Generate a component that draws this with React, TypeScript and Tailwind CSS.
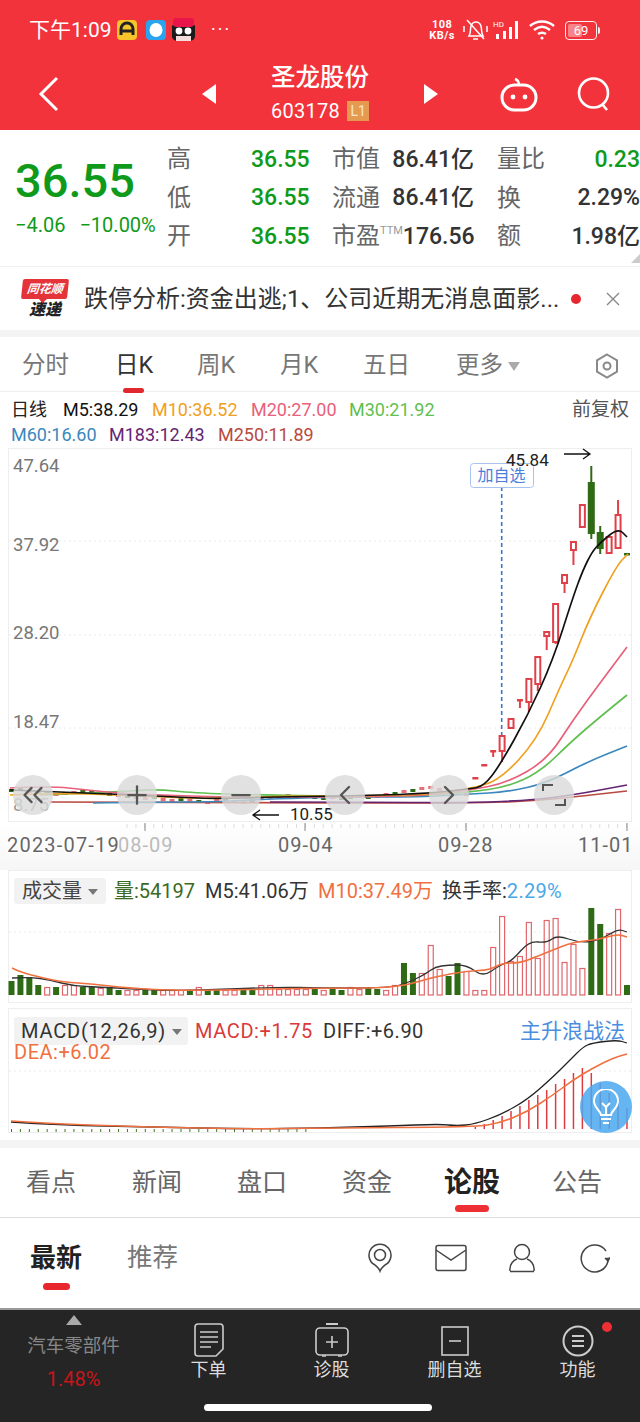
import { ChevronLeft, ChevronRight, ChevronsLeft, Minus, Plus } from "lucide-react";

type Pt = [number, number];

// smooth line through the points, good enough for the MA curves
const smooth = (pts: Pt[]) => {
  let d = `M${pts[0][0]} ${pts[0][1]}`;
  for (let i = 1; i < pts.length - 1; i++) {
    const mx = (pts[i][0] + pts[i + 1][0]) / 2;
    const my = (pts[i][1] + pts[i + 1][1]) / 2;
    d += ` Q${pts[i][0]} ${pts[i][1]} ${mx} ${my}`;
  }
  const last = pts[pts.length - 1];
  return d + ` L${last[0]} ${last[1]}`;
};

const barX = (i: number) => 11.5 + i * 8.92;
const RED = "#e0404a";
const GREEN = "#2f6b14";

const maLines: { color: string; pts: Pt[] }[] = [
  { color: "#b84a40", pts: [[50, 802], [297, 803], [400, 803], [470, 803], [533, 801], [573, 797], [627, 791]] },
  { color: "#642472", pts: [[270, 802], [380, 802], [470, 803], [533, 800], [573, 795], [627, 785]] },
  { color: "#3b88bc", pts: [[93, 803], [157, 802], [213, 802], [270, 799], [340, 797], [420, 797], [470, 794], [507, 792], [547, 783], [587, 762], [627, 746]] },
  { color: "#5fbf4f", pts: [[40, 795], [117, 792], [157, 789], [193, 793], [260, 795], [340, 796], [420, 796], [470, 792], [507, 787], [540, 772], [573, 740], [600, 717], [627, 695]] },
  { color: "#e8607a", pts: [[10, 788], [50, 786], [87, 790], [117, 793], [160, 795], [220, 797], [275, 797], [340, 797], [420, 796], [470, 790], [507, 783], [547, 760], [573, 720], [600, 683], [627, 647]] },
  { color: "#f0a020", pts: [[10, 795], [60, 793], [117, 795], [160, 797], [220, 799], [275, 796], [340, 796], [420, 795], [470, 789], [500, 780], [537, 740], [560, 687], [573, 660], [590, 617], [617, 565], [628, 554]] },
  { color: "#111111", pts: [[10, 790], [60, 792], [110, 794], [157, 796], [217, 799], [270, 797], [340, 796], [420, 794], [470, 789], [484, 786], [500, 765], [528, 715], [553, 660], [573, 597], [583, 570], [592, 552], [600, 543], [618, 528], [627, 537]] },
];

// top, bottom, wick top, wick bottom, green or red
const lateCandles: [number, number, number, number, boolean][] = [
  [778, 779, 778, 779, false],
  [765, 766, 765, 766, false],
  [751, 752, 751, 757, false],
  [736, 751, 736, 762, false],
  [719, 728, 719, 728, false],
  [700, 701, 700, 708, false],
  [679, 702, 679, 712, false],
  [657, 684, 657, 691, false],
  [632, 636, 632, 650, false],
  [604, 642, 604, 644, false],
  [575, 583, 575, 593, false],
  [542, 550, 542, 565, false],
  [505, 527, 505, 527, false],
  [483, 533, 466, 539, true],
  [533, 548, 526, 554, true],
  [537, 553, 537, 553, false],
  [515, 548, 500, 548, false],
  [554, 555, 554, 555, true],
];

const earlyCandles: [number, boolean][] = [
  [789, true], [788, true], [790, false], [791, true], [792, true], [793, false], [792, true], [791, false], [790, true], [791, true],
  [792, false], [793, true], [794, false], [795, true], [796, false], [797, false], [796, true], [798, false], [799, false], [798, true],
  [799, false], [800, true], [801, false], [799, false], [798, true], [800, false], [801, false], [799, true], [797, false], [796, false],
  [795, false], [794, false], [796, true], [795, false], [796, true], [797, true], [796, false], [797, true], [796, true], [795, false],
  [796, true], [795, false], [793, false], [792, true], [790, false], [789, true], [787, false], [786, false], [788, false], [790, false],
  [792, false], [793, false],
];

const volumes: [number, boolean][] = [
  [14, true], [20, true], [18, true], [10, true], [8, false], [8, true], [10, false], [10, false], [8, true], [8, true],
  [7, false], [7, true], [5, true], [5, false], [5, false], [5, true], [5, true], [5, false], [5, false], [5, false],
  [5, true], [8, false], [5, true], [5, true], [5, false], [5, false], [5, true], [5, true], [10, false], [10, false],
  [6, false], [6, false], [6, false], [6, false], [6, true],
  [5, false], [6, true], [5, true], [8, false], [6, false], [7, true], [6, true], [5, false], [10, false], [32, true],
  [22, true], [22, false], [50, false], [26, false], [19, true], [32, true], [24, false], [5, false], [5, false], [48, false],
  [79, false], [34, false], [39, false], [73, false], [37, false], [75, false], [77, false], [33, false], [51, false], [27, false],
  [87, true], [71, true], [62, false], [86, false], [10, true],
];

const macdTops = [1127, 1124, 1120, 1116, 1111, 1106, 1100, 1095, 1090, 1084, 1079, 1073, 1068, 1073, 1083, 1093, 1101, 1108];

const StatusBar = () => (
  <div className="relative flex h-[58px] items-center pt-[2px] pl-[29px] pr-[43px] text-white">
    <span className="w-[88px] text-[21px] leading-none">下午1:09</span>
    <svg width="20" height="20" viewBox="0 0 20 20">
      <rect width="20" height="20" rx="4" fill="#f7c52b" />
      <path d="M4 15V9a6 6 0 0 1 12 0v6" fill="none" stroke="#222" strokeWidth="3" />
      <path d="M4 11h12" stroke="#222" strokeWidth="3" />
    </svg>
    <svg className="ml-[9px]" width="20" height="20" viewBox="0 0 20 20">
      <rect width="20" height="20" rx="4" fill="#2aa4ee" />
      <ellipse cx="10" cy="10" rx="6.5" ry="7" fill="#fff" />
    </svg>
    <svg className="ml-[5px]" width="25" height="24" viewBox="0 0 25 24">
      <rect x="2" y="0" width="21" height="9" rx="3" fill="#e8154a" />
      <path d="M1 7l4 2h15l4-2v11a5 5 0 0 1-5 5H6a5 5 0 0 1-5-5z" fill="#1b1b1b" />
      <circle cx="8" cy="13" r="3.4" fill="#fff" />
      <circle cx="17" cy="13" r="3.4" fill="#fff" />
      <rect x="5" y="18" width="15" height="5" fill="#f2dcdc" />
    </svg>
    <span className="ml-[15px] text-[18px] leading-none tracking-[2px]">···</span>
    <div className="ml-auto flex items-center">
      <div className="flex flex-col items-center text-[11px] leading-[11px] font-bold tracking-[0.5px]">
        <span>108</span>
        <span>KB/s</span>
      </div>
      <svg className="ml-[6px]" width="28" height="26" viewBox="0 0 28 26" fill="none" stroke="#fff" strokeWidth="1.5">
        <path d="M8 19c2-3 1-6 2-10 1-3 3-4 5-4s4 1 5 4c1 4 0 7 2 10z" />
        <path d="M12 22h5M6 3l17 19M3 9v6M26 9v6" />
      </svg>
      <svg className="ml-[4px]" width="30" height="24" viewBox="0 0 30 24" fill="#fff">
        <rect x="3" y="16" width="3" height="5" />
        <rect x="10" y="13" width="3" height="8" />
        <rect x="16" y="9" width="3" height="12" />
        <rect x="22" y="3" width="3" height="18" />
        <text x="0" y="9" fontSize="8" fontFamily="Roboto, sans-serif">HD</text>
      </svg>
      <svg className="ml-[6px]" width="27" height="22" viewBox="0 0 27 22" fill="none" stroke="#fff" strokeWidth="2.4">
        <path d="M1 7c7-6 17-6 24 0M5 11c5-4 11-4 16 0M9 15c3-2 5-2 8 0" />
        <circle cx="13" cy="19" r="1.6" fill="#fff" stroke="none" />
      </svg>
      <div className="relative ml-[9px] flex h-[19px] w-[32px] items-center justify-center rounded-[4px] border border-white/90 text-[13px] leading-none">
        <div className="absolute top-[2px] bottom-[2px] left-[2px] w-[14px] rounded-[2px] bg-white/40" />
        <span className="relative">69</span>
        <div className="absolute top-[5px] -right-[4px] h-[7px] w-[2px] rounded-r bg-white/90" />
      </div>
    </div>
  </div>
);

const NavBar = () => (
  <div className="flex h-[72px] items-center text-white">
    <div className="flex w-[202px] pl-[38px]">
      <svg width="24" height="36" viewBox="0 0 24 36" fill="none" stroke="#fff" strokeWidth="3">
        <path d="M19 2L3 18l16 16" />
      </svg>
    </div>
    <svg width="14" height="20" viewBox="0 0 14 20" fill="#fff">
      <path d="M14 0v20L0 10z" />
    </svg>
    <div className="flex w-[208px] flex-col items-center pb-[5px]">
      <span className="text-[24.5px] leading-[33px] font-medium">圣龙股份</span>
      <div className="mt-[5px] flex items-center gap-[7px]">
        <span className="text-[20px] leading-[24px] tracking-[0.3px]">603178</span>
        <span className="flex h-[20px] w-[22px] items-center justify-center bg-[#e59a4f] text-[14px] leading-none text-[#fbe7c8]">L1</span>
      </div>
    </div>
    <svg width="14" height="20" viewBox="0 0 14 20" fill="#fff">
      <path d="M0 0v20l14-10z" />
    </svg>
    <svg className="ml-[62px]" width="38" height="36" viewBox="0 0 38 36" fill="none" stroke="#fff" strokeWidth="3">
      <rect x="2" y="9" width="34" height="25" rx="12.5" />
      <path d="M19 9c0-3-1-5-4-6" strokeWidth="2.4" />
      <circle cx="13" cy="21" r="2.4" fill="#fff" stroke="none" />
      <circle cx="25" cy="21" r="2.4" fill="#fff" stroke="none" />
    </svg>
    <svg className="ml-[39px]" width="34" height="36" viewBox="0 0 34 36" fill="none" stroke="#fff" strokeWidth="2.6">
      <circle cx="16.5" cy="17" r="14.5" />
      <path d="M25 28l5 6" />
    </svg>
  </div>
);

const StatRow = ({ label, high, midLabel, midValue, rightLabel, rightValue, rightColor }: {
  label: string;
  high: string;
  midLabel: React.ReactNode;
  midValue: string;
  rightLabel: string;
  rightValue: string;
  rightColor: string;
}) => (
  <div className="flex h-[38.5px] items-center text-[23px] leading-none">
    <span className="w-[84px] text-[24px] text-[#666]">{label}</span>
    <span className="w-[81px] font-medium text-[#0f9a1b]">{high}</span>
    <div className="flex w-[165px] items-center justify-between pr-[23px]">
      <span className="flex text-[24px] whitespace-nowrap text-[#666]">{midLabel}</span>
      <span className="font-medium text-[#333]">{midValue}</span>
    </div>
    <div className="flex w-[143px] items-center justify-between">
      <span className="text-[24px] text-[#666]">{rightLabel}</span>
      <span className={rightColor}>{rightValue}</span>
    </div>
  </div>
);

const Quote = () => (
  <div className="relative flex h-[137px] border-b border-[#f0f0f0]">
    <div className="w-[167px] pl-[15px] pt-[22px]">
      <div className="text-[47px] leading-[58px] font-medium text-[#0f9a1b]">36.55</div>
      <div className="mt-[3px] flex gap-[14px] text-[20px] leading-[24px] whitespace-nowrap text-[#0f9a1b]">
        <span>−4.06</span>
        <span>−10.00%</span>
      </div>
    </div>
    <div className="pt-[10px]">
      <StatRow label="高" high="36.55" midLabel="市值" midValue="86.41亿" rightLabel="量比" rightValue="0.23" rightColor="font-medium text-[#0f9a1b]" />
      <StatRow label="低" high="36.55" midLabel="流通" midValue="86.41亿" rightLabel="换" rightValue="2.29%" rightColor="font-medium text-[#333]" />
      <StatRow
        label="开"
        high="36.55"
        midLabel={<>市盈<span className="mt-[1px] text-[11px] leading-[12px] text-[#999]">TTM</span></>}
        midValue="176.56"
        rightLabel="额"
        rightValue="1.98亿"
        rightColor="font-medium text-[#333]"
      />
    </div>
    <div className="absolute right-0 bottom-[3px] h-0 w-0 border-b-[9px] border-l-[9px] border-b-[#ccc] border-l-transparent" />
  </div>
);

const NewsBar = () => (
  <div className="flex h-[63px] items-center pl-[22px]">
    <div className="flex w-[46px] flex-col items-center">
      <div className="relative flex h-[20px] w-[46px] -skew-x-6 items-center justify-center rounded-[2px] bg-[#e5333a] text-[12px] leading-none font-bold italic text-white">
        同花顺
        <div className="absolute -bottom-[4px] left-[18px] h-0 w-0 border-t-[4px] border-r-[4px] border-l-[4px] border-t-[#e5333a] border-r-transparent border-l-transparent" />
      </div>
      <div className="mt-[2px] text-[16px] leading-[18px] font-black italic text-[#222]">速递</div>
    </div>
    <span className="ml-[16px] w-[482px] text-[24px] leading-none whitespace-nowrap text-[#333]">跌停分析:资金出逃;1、公司近期无消息面影...</span>
    <div className="ml-[5px] size-[10px] rounded-full bg-[#e8262e]" />
    <svg className="ml-[24px]" width="16" height="16" viewBox="0 0 16 16" stroke="#888" strokeWidth="1.4">
      <path d="M2 2l12 12M14 2L2 14" />
    </svg>
  </div>
);

const PeriodTabs = () => (
  <div className="relative flex h-[55px] items-center border-b border-[#eee] pt-[3px] pl-[22px] text-[23.5px] leading-none text-[#777]">
    <span className="w-[93px]">分时</span>
    <span className="relative w-[82px] text-[#333]">
      日K
      <div className="absolute top-[34px] left-[8px] h-[5px] w-[21px] rounded-full bg-[#e0282e]" />
    </span>
    <span className="w-[83px]">周K</span>
    <span className="w-[83px]">月K</span>
    <span className="w-[93px]">五日</span>
    <span className="w-[47px]">更多</span>
    <div className="ml-[5px] mt-[2px] h-0 w-0 border-t-[9px] border-r-[6px] border-l-[6px] border-t-[#aaa] border-r-transparent border-l-transparent" />
    <svg className="ml-[75px]" width="24" height="26" viewBox="0 0 24 26" fill="none" stroke="#8a8a8a" strokeWidth="2">
      <path d="M12 1.5l10 5.8v11.4l-10 5.8-10-5.8V7.3z" />
      <circle cx="12" cy="13" r="3.5" />
    </svg>
  </div>
);

const Legend = () => (
  <div className="h-[56px] px-[11px] pt-[5px] text-[18px] leading-[25px]">
    <div className="flex">
      <span className="w-[52px] text-[#222]">日线</span>
      <span className="w-[89px] text-[#111]">M5:38.29</span>
      <span className="w-[99px] text-[#f0a020]">M10:36.52</span>
      <span className="w-[98px] text-[#e8607a]">M20:27.00</span>
      <span className="text-[#5fbf4f]">M30:21.92</span>
      <span className="ml-auto text-[19px] text-[#555]">前复权</span>
    </div>
    <div className="flex">
      <span className="w-[98px] text-[#3b88bc]">M60:16.60</span>
      <span className="w-[109px] text-[#642472]">M183:12.43</span>
      <span className="text-[#b84a40]">M250:11.89</span>
    </div>
  </div>
);

const axisFont = "Roboto, 'Noto Sans CJK SC', sans-serif";

const KChart = () => (
  <div className="relative mx-2 h-[374px] border border-[#eee]">
    <svg className="absolute -top-px -left-px h-[374px] w-[624px] overflow-visible" viewBox="8 448 624 374" fill="none" fontFamily={axisFont}>
      {[541, 635, 728].map((y) => (
        <path key={y} d={`M9 ${y}H631`} stroke="#eaeaea" strokeDasharray="2 3" />
      ))}
      <text x="13" y="472" fontSize="18.5" fill="#777">47.64</text>
      <text x="13" y="551" fontSize="18.5" fill="#777">37.92</text>
      <text x="13" y="639" fontSize="18.5" fill="#777">28.20</text>
      <text x="13" y="728" fontSize="18.5" fill="#777">18.47</text>
      <text x="13" y="811" fontSize="18.5" fill="#999">8.75</text>
      <path d="M501.7 487V752" stroke="#3f72c8" strokeWidth="1.6" strokeDasharray="4 3" />
      {earlyCandles.map(([y, green], i) => (
        <rect key={i} x={barX(i) - 2.5} y={y} width="5" height="3" fill={green ? GREEN : RED} fillOpacity={green ? 1 : 0.75} />
      ))}
      {lateCandles.map(([top, bottom, wickTop, wickBottom, green], i) => {
        const x = barX(52 + i);
        const color = green ? GREEN : RED;
        if (bottom - top < 2) {
          return (
            <g key={i}>
              <path d={`M${x} ${wickTop}V${wickBottom}`} stroke={color} strokeWidth="2" />
              <rect x={x - 3} y={top - 1} width="6" height="2.5" fill={color} />
            </g>
          );
        }
        return (
          <g key={i}>
            <path d={`M${x} ${wickTop}V${wickBottom}`} stroke={color} strokeWidth="2" />
            <rect x={x - 2.5} y={top} width="5" height={bottom - top} fill={green ? GREEN : "#fff"} stroke={color} strokeWidth="2" />
          </g>
        );
      })}
      {maLines.map((line) => (
        <path key={line.color} d={smooth(line.pts)} stroke={line.color} strokeWidth="1.7" />
      ))}
      <rect x="470.5" y="463.5" width="63" height="24" rx="3" fill="#fff" stroke="#a8c4ee" />
      <text x="501.5" y="481" fontSize="16" fill="#4a7fd8" textAnchor="middle">加自选</text>
      <text x="506" y="466" fontSize="17" fill="#222">45.84</text>
      <path d="M564 454h26M583 449l7 5-7 5" stroke="#111" strokeWidth="1.3" />
      <text x="290" y="820" fontSize="17" fill="#222">10.55</text>
      <path d="M279 815h-26M260 810l-7 5 7 5" stroke="#111" strokeWidth="1.3" />
    </svg>
    <div className="absolute top-[326px] left-[4px] flex size-10 items-center justify-center rounded-full bg-[#d9d9d9]/80">
      <ChevronsLeft size={34} strokeWidth={1.6} className="text-[#555]" />
    </div>
    <div className="absolute top-[326px] left-[108px] flex size-10 items-center justify-center rounded-full bg-[#d9d9d9]/80">
      <Plus size={30} strokeWidth={1.8} className="text-[#555]" />
    </div>
    <div className="absolute top-[326px] left-[212px] flex size-10 items-center justify-center rounded-full bg-[#d9d9d9]/80">
      <Minus size={30} strokeWidth={1.8} className="text-[#555]" />
    </div>
    <div className="absolute top-[326px] left-[316px] flex size-10 items-center justify-center rounded-full bg-[#d9d9d9]/80">
      <ChevronLeft size={32} strokeWidth={1.8} className="text-[#555]" />
    </div>
    <div className="absolute top-[326px] left-[420px] flex size-10 items-center justify-center rounded-full bg-[#d9d9d9]/80">
      <ChevronRight size={32} strokeWidth={1.8} className="text-[#555]" />
    </div>
    <div className="absolute top-[326px] left-[525px] flex size-10 items-center justify-center rounded-full bg-[#d9d9d9]/80">
      <svg width="24" height="22" viewBox="0 0 24 22" fill="none" stroke="#555" strokeWidth="2">
        <path d="M1 7V1h10M23 15v6H13" />
      </svg>
    </div>
  </div>
);

const DateAxis = () => (
  <div className="h-[48px] bg-gradient-to-b from-white to-[#f6f6f6]">
    <svg className="block h-[48px] w-[640px]" viewBox="0 822 640 48" fontFamily={axisFont}>
      {Array.from({ length: 57 }, (_, i) => (
        <path key={i} d={`M${127 + i * 8.92} 824v4`} stroke="#ddd" />
      ))}
      {[145, 305, 466, 627].map((x) => (
        <path key={x} d={`M${x} 823v8`} stroke="#888" />
      ))}
      <text x="118" y="852" fontSize="20" fill="#bbb" letterSpacing="1">08-09</text>
      <text x="7" y="852" fontSize="20" fill="#666" letterSpacing="1.2" stroke="#fff" strokeWidth="3" paintOrder="stroke">2023-07-19</text>
      <text x="278" y="852" fontSize="20" fill="#666" letterSpacing="1">09-04</text>
      <text x="438" y="852" fontSize="20" fill="#666" letterSpacing="1">09-28</text>
      <text x="578" y="852" fontSize="20" fill="#666" letterSpacing="1">11-01</text>
    </svg>
  </div>
);

const VolumePanel = () => (
  <div className="relative mx-2 h-[133px] border border-[#eee]">
    <svg className="absolute -top-px -left-px h-[133px] w-[624px]" viewBox="8 870 624 133" fill="none">
      <path d="M9 932H631" stroke="#eaeaea" strokeDasharray="2 3" />
      {volumes.map(([h, green], i) =>
        green ? (
          <rect key={i} x={barX(i) - 3} y={995 - h} width="6" height={h} fill={GREEN} />
        ) : (
          <rect key={i} x={barX(i) - 2.5} y={995 - h + 0.5} width="5" height={h - 0.5} fill="#fff" stroke="#e0666c" strokeWidth="1.2" />
        ),
      )}
      <path d={smooth([[12, 978], [30, 977], [50, 980], [73, 986], [100, 987], [133, 989], [183, 991], [277, 987], [320, 988], [390, 988], [410, 982], [427, 973], [435, 967], [448, 965], [467, 965], [483, 977], [500, 965], [512, 961], [529, 941], [547, 943], [557, 935], [580, 943], [600, 940], [618, 929], [627, 932]])} stroke="#333" strokeWidth="1.3" />
      <path d={smooth([[12, 968], [20, 972], [43, 978], [63, 982], [93, 984], [127, 988], [183, 991], [320, 988], [397, 988], [433, 977], [467, 971], [490, 970], [502, 963], [520, 963], [533, 958], [553, 950], [573, 942], [597, 940], [617, 934], [627, 937]])} stroke="#f07040" strokeWidth="1.5" />
    </svg>
    <div className="relative flex h-[40px] items-center pl-[5px] text-[20px] leading-none">
      <div className="flex h-[26px] w-[92px] items-center justify-center gap-[6px] rounded-[3px] bg-[#f2f2f2] text-[#444]">
        成交量
        <div className="mt-[1px] h-0 w-0 border-t-[6px] border-r-[5px] border-l-[5px] border-t-[#777] border-r-transparent border-l-transparent" />
      </div>
      <span className="ml-[8px] w-[91px] text-[#3a6a1f]">量:54197</span>
      <span className="w-[113px] text-[#333]">M5:41.06万</span>
      <span className="w-[124px] text-[#f07040]">M10:37.49万</span>
      <span className="text-[#333]">换手率:</span>
      <span className="tracking-[0.3px] text-[#4aa8e8]">2.29%</span>
    </div>
  </div>
);

const MacdPanel = () => (
  <div className="relative mx-2 mt-[5px] h-[125px] border border-[#eee]">
    <svg className="absolute -top-px -left-px h-[125px] w-[624px]" viewBox="8 1008 624 125" fill="none">
      <path d="M9 1071H631" stroke="#eaeaea" strokeDasharray="2 3" />
      {Array.from({ length: 34 }, (_, i) => (
        <path key={i} d={`M${barX(i)} 1129v3`} stroke="#3f7a20" />
      ))}
      {macdTops.map((top, i) => (
        <path key={i} d={`M${barX(52 + i)} ${top}V1129`} stroke="#dd3a42" strokeWidth="1.5" />
      ))}
      <path d={smooth([[11, 1122], [60, 1125], [150, 1127], [250, 1129], [320, 1128], [390, 1126], [440, 1124], [457, 1126], [475, 1124], [500, 1115], [527, 1100], [553, 1077], [570, 1060], [583, 1047], [592, 1043], [617, 1040], [627, 1043]])} stroke="#222" strokeWidth="1.3" />
      <path d={smooth([[11, 1121], [60, 1124], [150, 1127], [250, 1129], [320, 1128], [475, 1127], [500, 1123], [527, 1112], [553, 1095], [573, 1080], [593, 1068], [613, 1058], [627, 1054]])} stroke="#f07040" strokeWidth="1.5" />
    </svg>
    <div className="relative flex h-[44px] items-center pl-[5px] text-[20px] leading-none">
      <div className="flex h-[28px] w-[174px] items-center gap-[6px] rounded-[3px] bg-[#f2f2f2] pl-[7px] tracking-[0.8px] text-[#333]">
        MACD(12,26,9)
        <div className="mt-[1px] h-0 w-0 border-t-[6px] border-r-[5px] border-l-[5px] border-t-[#777] border-r-transparent border-l-transparent" />
      </div>
      <span className="ml-[7px] w-[128px] tracking-[0.6px] text-[#d93a3a]">MACD:+1.75</span>
      <span className="tracking-[0.5px] text-[#333]">DIFF:+6.90</span>
      <span className="ml-auto mr-[6px] text-[21px] text-[#4a8ee0]">主升浪战法</span>
    </div>
    <div className="relative -mt-[10px] pl-[5px] text-[20px] leading-[18px] tracking-[0.5px] text-[#f07040]">DEA:+6.02</div>
    <div className="absolute top-[72px] left-[571px] flex size-[52px] items-center justify-center rounded-full bg-[#4aa8f0]/85">
      <svg width="30" height="36" viewBox="0 0 30 36" fill="none" stroke="#fff" strokeWidth="2">
        <path d="M10 26c0-4-7-7-7-14a12 12 0 0 1 24 0c0 7-7 10-7 14z" />
        <path d="M11 14l4 4 4-4M15 18v8M10 30h10M12 34h6" />
      </svg>
    </div>
  </div>
);

const InfoTabs = () => (
  <div className="relative flex h-[70px] items-center border-b border-[#ddd] pl-[26px] text-[25px] leading-none text-[#666]">
    <span className="w-[106px]">看点</span>
    <span className="w-[105px]">新闻</span>
    <span className="w-[105px]">盘口</span>
    <span className="w-[102px]">资金</span>
    <span className="relative w-[108px] text-[28px] font-bold text-[#222]">
      论股
      <div className="absolute top-[36px] left-[11px] h-[7px] w-[34px] rounded-full bg-[#ee2f34]" />
    </span>
    <span>公告</span>
  </div>
);

const SubTabs = () => (
  <div className="flex h-[90px] items-center pb-[10px] pl-[30px]">
    <span className="relative w-[97px] text-[26px] leading-none font-bold text-[#222]">
      最新
      <div className="absolute top-[38px] left-[13px] h-[7px] w-[27px] rounded-full bg-[#e8262e]" />
    </span>
    <span className="text-[25.5px] leading-none text-[#777]">推荐</span>
    <svg className="ml-[190px]" width="24" height="30" viewBox="0 0 24 30" fill="none" stroke="#444" strokeWidth="1.5">
      <path d="M12 28c-1-3-3-4-5-6a11 11 0 1 1 10 0c-2 2-4 3-5 6z" />
      <circle cx="12" cy="12" r="5.5" />
    </svg>
    <svg className="ml-[43px]" width="32" height="28" viewBox="0 0 32 28" fill="none" stroke="#444" strokeWidth="1.5">
      <rect x="1" y="1.5" width="30" height="25" rx="2" />
      <path d="M1 6l15 10 15-10" />
    </svg>
    <svg className="ml-[41px]" width="28" height="30" viewBox="0 0 28 30" fill="none" stroke="#444" strokeWidth="1.5">
      <circle cx="14" cy="9" r="7.5" />
      <path d="M2 28c-1-7 4-11 7-12M26 28c1-7-4-11-7-12M2 28.5h24" />
    </svg>
    <svg className="ml-[44px]" width="30" height="30" viewBox="0 0 30 30" fill="none" stroke="#444" strokeWidth="1.5">
      <path d="M26 8a13.5 13.5 0 1 0 2 10" />
      <path d="M25 15l3 3 2-3.5" fill="#444" />
    </svg>
  </div>
);

const BottomBar = () => (
  <div className="relative flex h-[114px] border-t-2 border-[#999] bg-[#252525] text-[18px] leading-none text-[#ddd]">
    <div className="flex w-[147px] flex-col items-center pt-[5px]">
      <div className="h-0 w-0 border-r-[8px] border-b-[10px] border-l-[8px] border-r-transparent border-b-[#aaa] border-l-transparent" />
      <span className="mt-[12px] text-[18.5px] text-[#888]">汽车零部件</span>
      <span className="mt-[13px] text-[20px] text-[#c8151b]">1.48%</span>
    </div>
    <div className="flex w-[123px] flex-col items-center pt-[12px]">
      <svg className="h-[36px]" width="30" height="36" viewBox="0 0 30 36" fill="none" stroke="#ccc" strokeWidth="1.6">
        <path d="M4 2h22a3 3 0 0 1 3 3v22l-7 7H4a3 3 0 0 1-3-3V5a3 3 0 0 1 3-3z" />
        <path d="M6 10h18M6 15h18M6 20h18M6 25h11" />
      </svg>
      <span className="mt-[3px]">下单</span>
    </div>
    <div className="flex w-[123px] flex-col items-center pt-[12px]">
      <svg className="h-[36px]" width="34" height="36" viewBox="0 0 34 36" fill="none" stroke="#ccc" strokeWidth="1.6">
        <path d="M11 2h12" strokeWidth="2" />
        <rect x="1" y="6" width="32" height="27" rx="4" />
        <path d="M17 14v12M11 20h12M7 34h4M23 34h4" />
      </svg>
      <span className="mt-[3px]">诊股</span>
    </div>
    <div className="flex w-[123px] flex-col items-center pt-[14px]">
      <svg className="h-[34px]" width="28" height="30" viewBox="0 0 28 30" fill="none" stroke="#ccc" strokeWidth="1.6">
        <rect x="1" y="1" width="26" height="28" />
        <path d="M8 15h12" />
      </svg>
      <span className="mt-[3px]">删自选</span>
    </div>
    <div className="relative flex w-[123px] flex-col items-center pt-[14px]">
      <svg className="h-[34px]" width="32" height="32" viewBox="0 0 32 32" fill="none" stroke="#ccc" strokeWidth="2">
        <circle cx="16" cy="16" r="14.5" />
        <path d="M10 11h12M10 16h12M10 21h12" />
      </svg>
      <span className="mt-[3px]">功能</span>
      <div className="absolute top-[12px] left-[86px] size-[10px] rounded-full bg-[#ee2f34]" />
    </div>
    <div className="absolute top-[94px] left-[204px] h-[7px] w-[228px] rounded-full bg-white" />
  </div>
);

export default function App() {
  return (
    <div className="flex h-[1422px] w-[640px] flex-col overflow-hidden bg-white font-['Roboto','Noto_Sans_CJK_SC',sans-serif]">
      <div className="h-[130px] bg-[#f2333b]">
        <StatusBar />
        <NavBar />
      </div>
      <Quote />
      <NewsBar />
      <div className="h-[7px] bg-[#f4f4f4]" />
      <PeriodTabs />
      <Legend />
      <KChart />
      <DateAxis />
      <VolumePanel />
      <MacdPanel />
      <div className="h-[7px]" />
      <div className="h-[8px] bg-[#f4f4f4]" />
      <InfoTabs />
      <SubTabs />
      <BottomBar />
    </div>
  );
}
